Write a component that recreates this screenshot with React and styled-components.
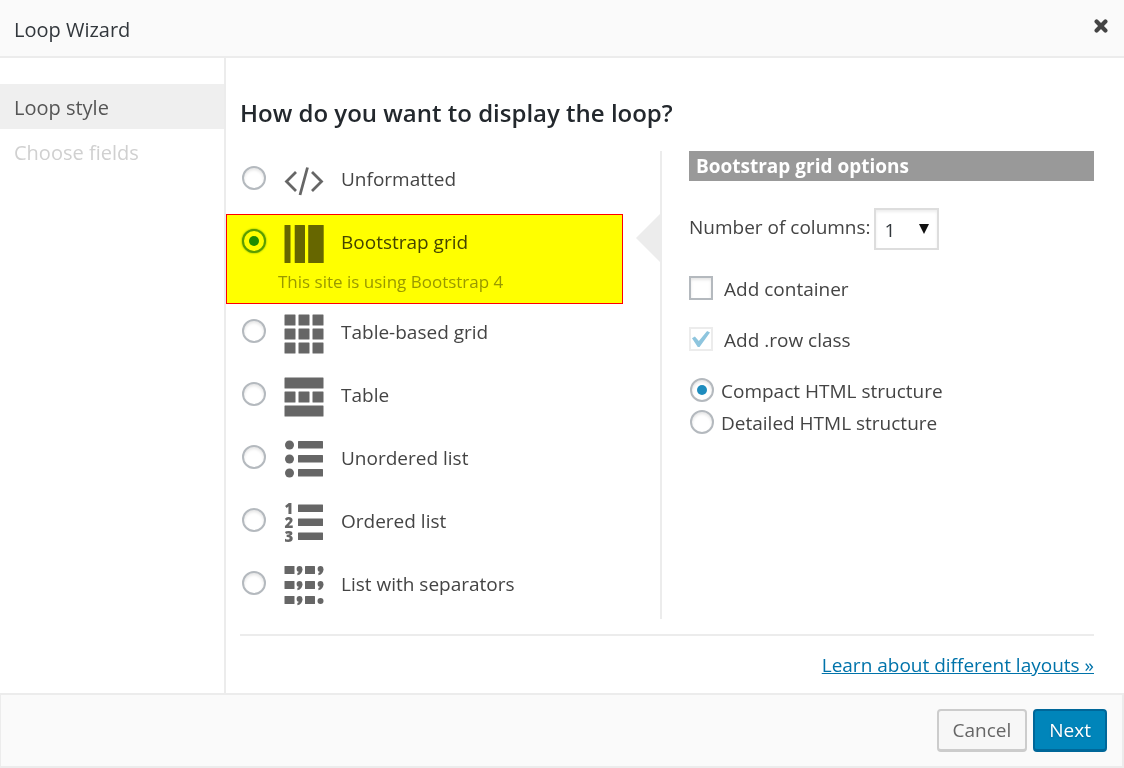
import { useState } from "react";
import styled, { createGlobalStyle } from "styled-components";

const layouts = [
  { id: "unformatted", label: "Unformatted", Icon: CodeIcon },
  { id: "bootstrap", label: "Bootstrap grid", Icon: ColumnsIcon, note: "This site is using Bootstrap 4" },
  { id: "table-grid", label: "Table-based grid", Icon: GridIcon },
  { id: "table", label: "Table", Icon: TableIcon },
  { id: "ul", label: "Unordered list", Icon: BulletsIcon },
  { id: "ol", label: "Ordered list", Icon: NumbersIcon },
  { id: "separators", label: "List with separators", Icon: SeparatorsIcon },
];

const App = () => {
  const [layout, setLayout] = useState("bootstrap");
  const [columns, setColumns] = useState("1");
  const [container, setContainer] = useState(false);
  const [structure, setStructure] = useState("compact");

  return (
    <Dialog>
      <GlobalStyle />
      <Header>
        <DialogTitle>Loop Wizard</DialogTitle>
        <CloseButton type="button" aria-label="Close">
          <CloseIcon />
        </CloseButton>
      </Header>
      <Body>
        <Sidebar>
          <Step $active>Loop style</Step>
          <Step>Choose fields</Step>
        </Sidebar>
        <Main>
          <Heading>How do you want to display the loop?</Heading>
          <Columns>
            <LayoutList>
              {layouts.map(({ id, label, Icon, note }) => (
                <LayoutRow key={id} $selected={layout === id}>
                  <LayoutLabel>
                    <Radio
                      name="layout"
                      value={id}
                      checked={layout === id}
                      $focused={layout === id}
                      onChange={() => setLayout(id)}
                    />
                    <Icon />
                    <span>{label}</span>
                  </LayoutLabel>
                  {note && <Note>{note}</Note>}
                </LayoutRow>
              ))}
            </LayoutList>
            <Options>
              <OptionsTitle>Bootstrap grid options</OptionsTitle>
              <SelectRow>
                <label htmlFor="columns">Number of columns:</label>
                <SelectBox>
                  <Select id="columns" value={columns} onChange={(e) => setColumns(e.target.value)}>
                    <option>1</option>
                    <option>2</option>
                    <option>3</option>
                    <option>4</option>
                    <option>6</option>
                    <option>12</option>
                  </Select>
                  <Arrow viewBox="0 0 10 10">
                    <path d="M0 0h10L5 10z" />
                  </Arrow>
                </SelectBox>
              </SelectRow>
              <CheckRow>
                <Checkbox checked={container} onChange={(e) => setContainer(e.target.checked)} />
                Add container
              </CheckRow>
              <CheckRow>
                <Checkbox checked disabled readOnly />
                Add .row class
              </CheckRow>
              <RadioGroup>
                <RadioRow>
                  <Radio
                    name="structure"
                    checked={structure === "compact"}
                    onChange={() => setStructure("compact")}
                  />
                  Compact HTML structure
                </RadioRow>
                <RadioRow>
                  <Radio
                    name="structure"
                    checked={structure === "detailed"}
                    onChange={() => setStructure("detailed")}
                  />
                  Detailed HTML structure
                </RadioRow>
              </RadioGroup>
            </Options>
          </Columns>
          <Learn>
            <LearnLink href="#">Learn about different layouts »</LearnLink>
          </Learn>
        </Main>
      </Body>
      <Footer>
        <Button type="button">Cancel</Button>
        <Button type="button" $primary>Next</Button>
      </Footer>
    </Dialog>
  );
};
export default App;

// Icons
function CloseIcon() {
  return (
    <svg width="14" height="14" viewBox="0 0 14 14" aria-hidden="true">
      <path d="M2.6 2.6l8.8 8.8M11.4 2.6l-8.8 8.8" stroke="#444" strokeWidth="4.2" strokeLinecap="round" />
    </svg>
  );
}

function CodeIcon() {
  return (
    <LayoutIcon viewBox="0 0 40 40">
      <path
        d="M12 11l-9.500 9.500 9.500 9.500M28 11l9.500 9.500-9.500 9.500M23.500 6.500L16 34"
        fill="none"
        stroke="#666"
        strokeWidth="2.800"
      />
    </LayoutIcon>
  );
}

function ColumnsIcon() {
  return (
    <LayoutIcon viewBox="0 0 40 40">
      <rect x="0.500" y="1" width="6" height="38" rx="0.500" />
      <rect x="10.700" y="1" width="10.300" height="38" rx="0.500" />
      <rect x="24.200" y="1" width="15.500" height="38" rx="0.500" />
    </LayoutIcon>
  );
}

function GridIcon() {
  return (
    <LayoutIcon viewBox="0 0 40 40">
      {[0.5, 14.5, 28.5].map((y) =>
        [0.5, 14.5, 28.5].map((x) => <rect key={`${x}-${y}`} x={x} y={y} width="11" height="11" rx="0.500" />)
      )}
    </LayoutIcon>
  );
}

function TableIcon() {
  return (
    <LayoutIcon viewBox="0 0 40 40">
      <rect x="0.500" y="0.500" width="39" height="11" rx="0.500" />
      {[0.5, 14.5, 28.5].map((x) => (
        <rect key={x} x={x} y="14.500" width="11" height="11" rx="0.500" />
      ))}
      <rect x="0.500" y="28.500" width="39" height="11" rx="0.500" />
    </LayoutIcon>
  );
}

function BulletsIcon() {
  return (
    <LayoutIcon viewBox="0 0 40 40">
      {[5, 19, 33].map((y) => (
        <g key={y}>
          <circle cx="5.500" cy={y} r="4.500" />
          <rect x="14" y={y - 4} width="25" height="7.500" rx="0.500" />
        </g>
      ))}
    </LayoutIcon>
  );
}

function NumbersIcon() {
  return (
    <LayoutIcon viewBox="0 0 40 40">
      {[1, 2, 3].map((n) => (
        <g key={n}>
          <text x="5" y={n * 14 - 3} textAnchor="middle">{n}</text>
          <rect x="14" y={n * 14 - 12.5} width="25" height="7.500" rx="0.500" />
        </g>
      ))}
    </LayoutIcon>
  );
}

function SeparatorsIcon() {
  return (
    <LayoutIcon viewBox="0 0 40 40">
      {[0, 15, 30].map((y) => (
        <g key={y}>
          <rect x="0.500" y={y} width="10" height="8" rx="0.500" />
          <Separator x={15.5} y={y + 3} />
          <rect x="21" y={y} width="10" height="8" rx="0.500" />
          {y < 30 ? <Separator x={36.5} y={y + 3} /> : <circle cx="36.500" cy={y + 5} r="3" />}
        </g>
      ))}
    </LayoutIcon>
  );
}

function Separator({ x, y }) {
  return (
    <g>
      <circle cx={x} cy={y} r="2.900" />
      <path d={`M${x + 2.9} ${y}q0.300 5-5 6.300v-2.300q2-0.800 2.300-2.500z`} />
    </g>
  );
}

// Styles
const GlobalStyle = createGlobalStyle`
  * {
    box-sizing: border-box;
  }

  body {
    margin: 0;
    background: #fff;
    color: #444;
    font-family: "Open Sans", "Noto Sans", sans-serif;
    font-size: 19px;
    line-height: 26px;
  }

  input, select, button {
    margin: 0;
    font: inherit;
  }
`;

const Dialog = styled.div`
  display: flex;
  flex-direction: column;
  min-height: 100vh;
`;

const Header = styled.header`
  display: flex;
  align-items: center;
  justify-content: space-between;
  padding: 16px 16px 13px 14px;
  background: #fafafa;
  border-bottom: 2px solid #ececec;
`;

const DialogTitle = styled.h1`
  margin: 0;
  color: #32373c;
  font-size: 20px;
  font-weight: 400;
  line-height: 27px;
`;

const CloseButton = styled.button`
  display: flex;
  padding: 0;
  margin-bottom: 8px;
  border: 0;
  background: none;
  cursor: pointer;
`;

const Body = styled.div`
  display: flex;
  flex: 1;
`;

const Sidebar = styled.nav`
  flex: 0 0 226px;
  padding-top: 26px;
  border-right: 2px solid #ececec;
`;

const Step = styled.div`
  padding: 11px 14px 8px;
  font-size: 20px;
  background: ${({ $active }) => ($active ? "#efefef" : "transparent")};
  color: ${({ $active }) => ($active ? "#555" : "#d0d0d0")};
`;

const Main = styled.main`
  flex: 1;
  padding: 38px 30px 15px 0;
`;

const Heading = styled.h2`
  margin: 0 0 21px 14px;
  color: #23282d;
  font-size: 24px;
  font-weight: 600;
  line-height: 34px;
`;

const Columns = styled.div`
  display: flex;
`;

const LayoutList = styled.div`
  flex: 0 0 436px;
  border-right: 2px solid #ececec;
`;

const LayoutRow = styled.div`
  position: relative;
  margin-right: 37px;
  padding: 6px 15px 5px;
  border: 1px solid ${({ $selected }) => ($selected ? "#f00" : "transparent")};
  background: ${({ $selected }) => ($selected ? "#ff0" : "none")};

  & > * {
    mix-blend-mode: multiply;
  }

  ${({ $selected }) => $selected && `
    &::after {
      content: "";
      position: absolute;
      top: -1px;
      right: -38px;
      width: 24px;
      height: 48px;
      background: #ececec;
      clip-path: polygon(100% 0, 100% 100%, 0 50%);
    }
  `}
`;

const LayoutLabel = styled.label`
  display: flex;
  align-items: center;
  height: 50px;

  input {
    margin: 0 18px 10px 0;
  }

  span {
    margin: 0 0 8px 17px;
  }
`;

const LayoutIcon = styled.svg.attrs({ "aria-hidden": true })`
  width: 40px;
  height: 40px;
  margin-bottom: 4px;
  overflow: visible;
  fill: #666;
  font-size: 15px;
  font-weight: 800;
  line-height: 14px;
`;

const Note = styled.div`
  padding: 0 0 6px 36px;
  color: #999;
  font-size: 17px;
  line-height: 21px;
`;

const Radio = styled.input.attrs({ type: "radio" })`
  appearance: none;
  display: grid;
  place-content: center;
  flex: none;
  width: 24px;
  height: 24px;
  border: 2px solid ${({ $focused }) => ($focused ? "#5b9dd9" : "#b4b9be")};
  border-radius: 50%;
  background: #fff;
  box-shadow: ${({ $focused }) => ($focused ? "0 0 2px #5b9dd9" : "inset 0 2px 3px rgba(0, 0, 0, 0.1)")};

  &:checked::before {
    content: "";
    width: 10px;
    height: 10px;
    border-radius: 50%;
    background: #1e8cbe;
  }
`;

const Checkbox = styled.input.attrs({ type: "checkbox" })`
  appearance: none;
  display: grid;
  place-content: center;
  flex: none;
  width: 24px;
  height: 24px;
  border: 2px solid #b4b9be;
  background: #fff;
  box-shadow: inset 0 2px 3px rgba(0, 0, 0, 0.1);

  &:checked::before {
    content: "";
    width: 18px;
    height: 16px;
    background: #8ec5de;
    clip-path: polygon(0 46%, 16% 34%, 38% 62%, 84% 0, 100% 10%, 42% 100%, 32% 100%);
  }

  &:disabled {
    border-color: #ececec;
    box-shadow: none;
  }
`;

const Options = styled.section`
  flex: 1;
  padding-left: 27px;
`;

const OptionsTitle = styled.h3`
  margin: 0 0 27px;
  padding: 0 7px;
  background: #999;
  color: #fff;
  font-size: 19px;
  font-weight: 700;
  line-height: 30px;
`;

const SelectRow = styled.div`
  display: flex;
  align-items: center;
  gap: 3px;
  margin-bottom: 26px;

  label {
    margin-bottom: 4px;
  }
`;

const SelectBox = styled.div`
  position: relative;
`;

const Select = styled.select`
  appearance: none;
  width: 65px;
  height: 42px;
  padding: 2px 9px 0;
  border: 2px solid #ddd;
  border-radius: 0;
  background: #fff;
  color: #32373c;
  box-shadow: inset 0 2px 3px rgba(0, 0, 0, 0.07);
`;

const Arrow = styled.svg`
  position: absolute;
  top: 16px;
  right: 10px;
  width: 10px;
  height: 10px;
  fill: #111;
  pointer-events: none;
`;

const CheckRow = styled.label`
  display: flex;
  align-items: center;
  gap: 11px;
  margin-bottom: 25px;

  input {
    margin-bottom: 2px;
  }
`;

const RadioGroup = styled.div`
  display: flex;
  flex-direction: column;
  gap: 6px;
`;

const RadioRow = styled.label`
  display: flex;
  align-items: center;
  gap: 7px;
  padding-left: 1px;

  input {
    margin-bottom: 2px;
  }
`;

const Learn = styled.div`
  margin: 15px 0 0 14px;
  padding-top: 16px;
  border-top: 2px solid #ececec;
  text-align: right;
`;

const LearnLink = styled.a`
  color: #0073aa;
`;

const Footer = styled.footer`
  display: flex;
  justify-content: flex-end;
  gap: 6px;
  padding: 14px 15px;
  background: #fafafa;
  border: 2px solid #ececec;
  border-left-width: 1px;
`;

const Button = styled.button`
  height: 43px;
  padding: 0 14px;
  border: 2px solid ${({ $primary }) => ($primary ? "#006799" : "#ccc")};
  border-bottom-width: 3px;
  border-radius: 4px;
  background: ${({ $primary }) => ($primary ? "#0085ba" : "#f7f7f7")};
  color: ${({ $primary }) => ($primary ? "#fff" : "#666")};
  text-shadow: ${({ $primary }) => ($primary ? "0 1px 2px #006799" : "none")};
  cursor: pointer;
`;
